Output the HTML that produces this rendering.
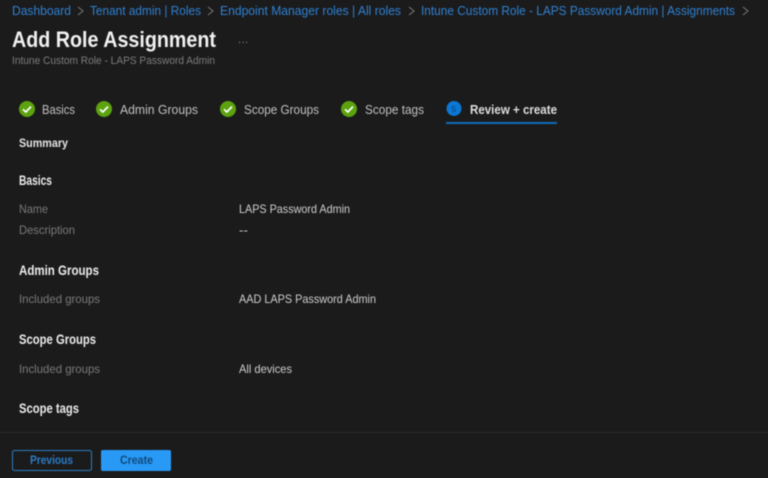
<!DOCTYPE html>
<html><head><meta charset="utf-8"><style>
html,body{margin:0;padding:0;background:#1b1b1b;width:768px;height:478px;overflow:hidden}
svg{display:block;filter:blur(.4px)}
text{font-family:"Liberation Sans",sans-serif}
.b{fill:#2f80d2;font-size:13px}
.c{fill:none;stroke:#7a7a7a;stroke-width:1}
.s{fill:#c0c0c0;font-size:13px}
.h{fill:#ececec;font-size:13.5px;font-weight:bold}
.l{fill:#7a7a7a;font-size:12px}
.v{fill:#cfcfcf;font-size:12px}
.k{fill:none;stroke:#fff;stroke-width:1.7}
</style></head><body>
<svg width="768" height="478" viewBox="0 0 768 478" xmlns="http://www.w3.org/2000/svg">
<rect width="768" height="478" fill="#1b1b1b"/>
<text class="b" x="12" y="15" textLength="59" lengthAdjust="spacingAndGlyphs">Dashboard</text>
<path class="c" d="M78 7l5 4-5 4"/>
<text class="b" x="90" y="15" textLength="111" lengthAdjust="spacingAndGlyphs">Tenant admin | Roles</text>
<path class="c" d="M208 7l5 4-5 4"/>
<text class="b" x="220" y="15" textLength="181" lengthAdjust="spacingAndGlyphs">Endpoint Manager roles | All roles</text>
<path class="c" d="M409 7l5 4-5 4"/>
<text class="b" x="421" y="15" textLength="314" lengthAdjust="spacingAndGlyphs">Intune Custom Role - LAPS Password Admin | Assignments</text>
<path class="c" d="M743 7l5 4-5 4"/>

<text x="12" y="47" font-size="22" font-weight="bold" fill="#f0f0f0" textLength="204" lengthAdjust="spacingAndGlyphs">Add Role Assignment</text>
<text x="238" y="43" font-size="11" fill="#8c8c8c" textLength="10" lengthAdjust="spacing">...</text>
<text x="12" y="64" font-size="11" fill="#7c7c7c" textLength="203" lengthAdjust="spacingAndGlyphs">Intune Custom Role - LAPS Password Admin</text>

<circle cx="27" cy="109" r="8" fill="#5da30f"/><path class="k" d="M23 109.3l2.8 2.7 5.2-5.4"/>
<text class="s" x="42" y="114" textLength="33" lengthAdjust="spacingAndGlyphs">Basics</text>
<circle cx="104" cy="109" r="8" fill="#5da30f"/><path class="k" d="M100 109.3l2.8 2.7 5.2-5.4"/>
<text class="s" x="120" y="114" textLength="78" lengthAdjust="spacingAndGlyphs">Admin Groups</text>
<circle cx="228" cy="109" r="8" fill="#5da30f"/><path class="k" d="M224 109.3l2.8 2.7 5.2-5.4"/>
<text class="s" x="244" y="114" textLength="75" lengthAdjust="spacingAndGlyphs">Scope Groups</text>
<circle cx="349" cy="109" r="8" fill="#5da30f"/><path class="k" d="M345 109.3l2.8 2.7 5.2-5.4"/>
<text class="s" x="365" y="114" textLength="59" lengthAdjust="spacingAndGlyphs">Scope tags</text>
<circle cx="454" cy="108.500" r="7.500" fill="#0a78d4"/>
<text x="451.500" y="112" font-size="8.500" fill="#10406e">5</text>
<text x="470" y="114" font-size="13" font-weight="bold" fill="#dedede" textLength="87" lengthAdjust="spacingAndGlyphs">Review + create</text>
<rect x="446" y="122" width="111" height="2" fill="#0f6cbd"/>

<text x="19" y="147" font-size="12" font-weight="bold" fill="#e4e4e4" textLength="49" lengthAdjust="spacingAndGlyphs">Summary</text>

<text class="h" x="19" y="185" textLength="33" lengthAdjust="spacingAndGlyphs">Basics</text>
<text class="l" x="19" y="213" textLength="29" lengthAdjust="spacingAndGlyphs">Name</text>
<text class="v" x="239" y="213" textLength="111" lengthAdjust="spacingAndGlyphs">LAPS Password Admin</text>
<text class="l" x="19" y="234" textLength="56" lengthAdjust="spacingAndGlyphs">Description</text>
<text class="v" x="239" y="234" font-size="11" textLength="9" lengthAdjust="spacingAndGlyphs">--</text>

<text class="h" x="19" y="275" textLength="80" lengthAdjust="spacingAndGlyphs">Admin Groups</text>
<text class="l" x="19" y="303" textLength="81" lengthAdjust="spacingAndGlyphs">Included groups</text>
<text class="v" x="239" y="303" textLength="137" lengthAdjust="spacingAndGlyphs">AAD LAPS Password Admin</text>

<text class="h" x="19" y="344" textLength="77" lengthAdjust="spacingAndGlyphs">Scope Groups</text>
<text class="l" x="19" y="373" textLength="81" lengthAdjust="spacingAndGlyphs">Included groups</text>
<text class="v" x="239" y="373" textLength="53" lengthAdjust="spacingAndGlyphs">All devices</text>

<text class="h" x="19" y="413" textLength="60" lengthAdjust="spacingAndGlyphs">Scope tags</text>

<rect x="0" y="432" width="768" height="1" fill="#2c2c2c"/>
<rect x="12.500" y="450.500" width="79" height="20" rx="2" fill="#1b1b1b" stroke="#2d7fc4"/>
<text x="30" y="464" font-size="11.500" font-weight="bold" fill="#2a7cc8" textLength="43" lengthAdjust="spacingAndGlyphs">Previous</text>
<rect x="101" y="450" width="70" height="21" rx="2" fill="#2899f5"/>
<text x="120" y="464" font-size="11.500" font-weight="bold" fill="#12497c" textLength="33" lengthAdjust="spacingAndGlyphs">Create</text>
</svg>
</body></html>
